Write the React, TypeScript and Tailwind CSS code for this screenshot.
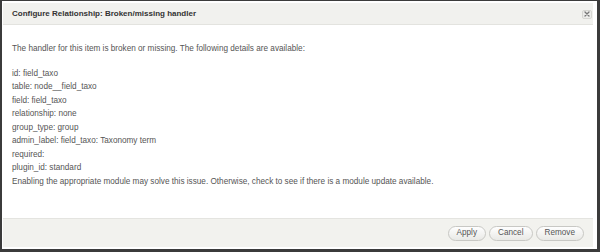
const details = [
  "id: field_taxo",
  "table: node__field_taxo",
  "field: field_taxo",
  "relationship: none",
  "group_type: group",
  "admin_label: field_taxo: Taxonomy term",
  "required:",
  "plugin_id: standard",
];

function DialogButton({ label }: { label: string }) {
  return (
    <button className="h-[15px] px-[8px] rounded-full border border-[#c8c8c4] bg-gradient-to-b from-[#fefefe] to-[#e9e9e6] text-[8.2px] leading-none text-[#555]">
      {label}
    </button>
  );
}

export default function App() {
  return (
    <div
      className="w-[600px] h-[252px] bg-[#3b3b3b] pl-[2px] pt-[1px] pr-[3px] pb-[3px] flex"
      style={{ fontFamily: '"Liberation Sans", Arial, sans-serif' }}
    >
      <div className="flex-1 bg-white pl-[1px] pt-[2px] pr-[4px] pb-[2px] flex flex-col">
        {/* title bar */}
        <div className="h-[22px] bg-[#f1f1ee] border-b border-[#e3e3df] flex items-center pl-[9px] pr-[1px]">
          <span className="flex-1 text-[8px] font-bold text-[#333]">
            Configure Relationship: Broken/missing handler
          </span>
          <button className="mt-[1px] w-[10px] h-[9px] rounded-[2px] border border-[#d6d6d2] bg-[#ececea] flex items-center justify-center">
            <svg width="6" height="6" viewBox="0 0 6 6">
              <path d="M1 1L5 5M5 1L1 5" stroke="#777" strokeWidth="1.3" strokeLinecap="round" />
            </svg>
          </button>
        </div>

        {/* body */}
        <div className="flex-1 pl-[9px] pt-[17px] text-[8.2px] leading-[13.5px] text-[#555]">
          <p className="mb-[11px]">
            The handler for this item is broken or missing. The following details are available:
          </p>
          {details.map((d) => (
            <div key={d}>{d}</div>
          ))}
          <p>
            Enabling the appropriate module may solve this issue. Otherwise, check to see if there is a module update available.
          </p>
        </div>

        {/* footer */}
        <div className="h-[29px] bg-[#f2f2ee] border-t border-[#e4e4e0] flex items-center justify-end gap-[3px] pr-[9px]">
          <DialogButton label="Apply" />
          <DialogButton label="Cancel" />
          <DialogButton label="Remove" />
        </div>
      </div>
    </div>
  );
}
